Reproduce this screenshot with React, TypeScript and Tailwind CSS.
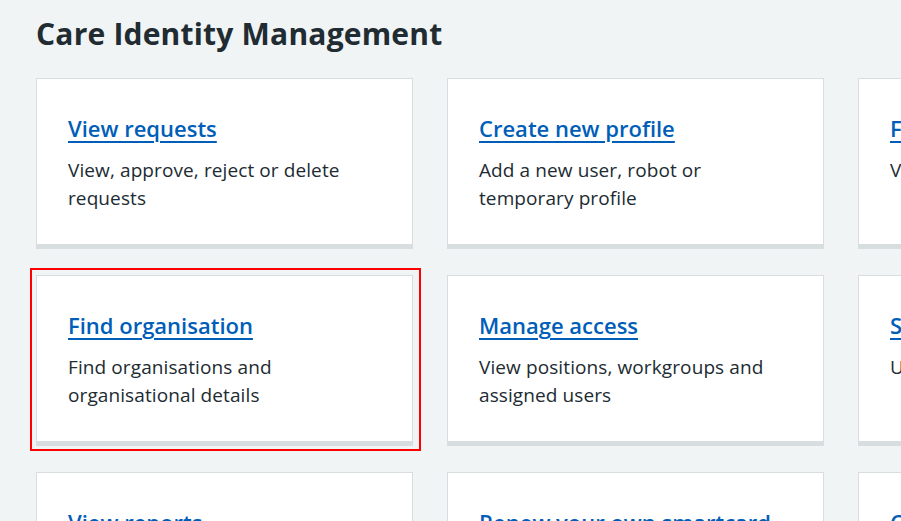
import React from "react";

const cards = [
  ["View requests", "View, approve, reject or delete requests"],
  ["Create new profile", "Add a new user, robot or temporary profile"],
  ["Find a user", "View and manage user profiles"],
  ["Find organisation", "Find organisations and organisational details"],
  ["Manage access", "View positions, workgroups and assigned users"],
  ["Smartcards", "Unlock and manage smartcards"],
  ["View reports", "View and download reports"],
  ["Renew your own smartcard", "Renew your smartcard certificates"],
  ["Check details", "Check your details"],
];

export default function App() {
  return (
    <div className="w-[901px] h-[521px] overflow-hidden bg-[#f0f4f5] text-[#212b32]" style={{ fontFamily: '"Open Sans", "Noto Sans", sans-serif' }}>
      <div className="pl-[36px] pt-[14px]">
        <h1 className="text-[30px] font-bold leading-[40px] tracking-[0.2px] mb-[24px]">Care Identity Management</h1>
        <div className="grid grid-cols-[377px_377px_377px] gap-x-[34px] gap-y-[30px] w-[1300px]">
          {cards.map(([t, d], i) => (
            <div key={i} className="relative">
              {i === 3 && <div className="absolute -left-[6px] -top-[7px] -right-[8px] -bottom-[9px] border-2 border-[#ff0000]" />}
              <div className="relative bg-white border border-[#d8dde0] shadow-[0_4px_0_#d8dde0] h-[167px] pl-[31px] pr-[40px] pt-[33px]">
                <a href="#" className="block text-[22px] font-semibold leading-[32px] text-[#005eb8] underline underline-offset-[4px] decoration-[2px] mb-[12px]">{t}</a>
                <p className="text-[19px] leading-[28px] tracking-[0.1px]">{d}</p>
              </div>
            </div>
          ))}
        </div>
      </div>
    </div>
  );
}
